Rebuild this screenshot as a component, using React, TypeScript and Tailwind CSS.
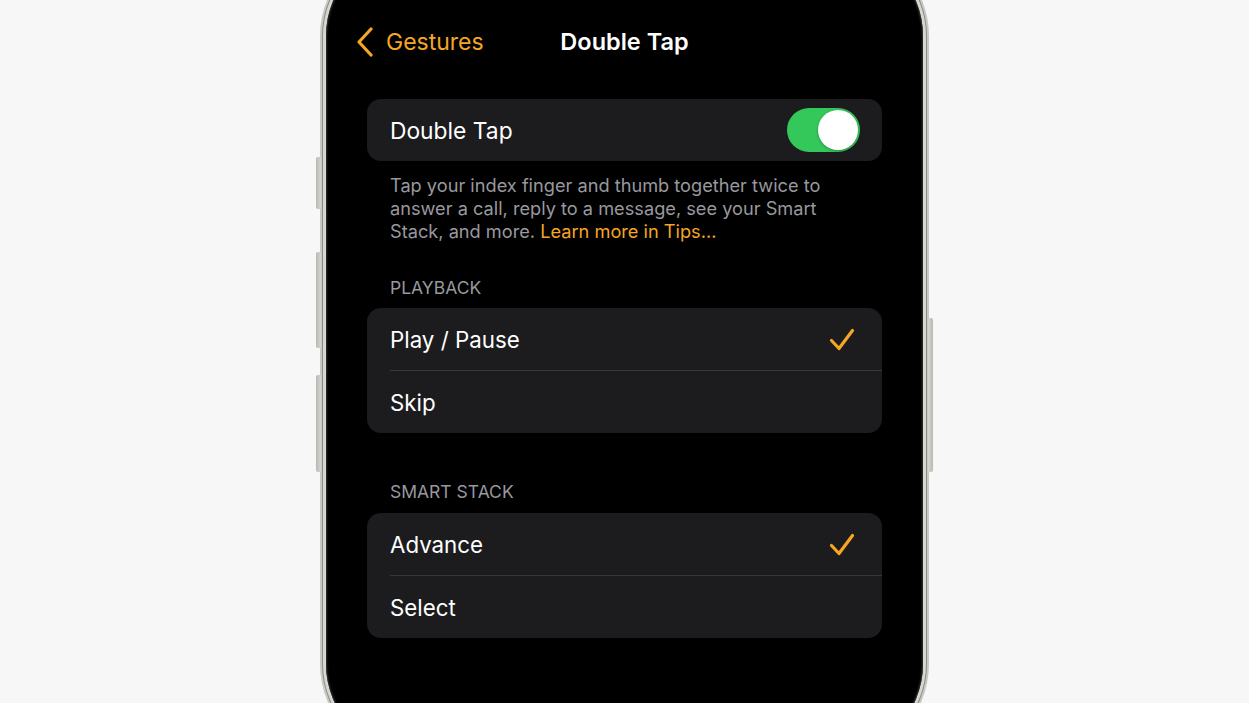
import React from "react";

const ORANGE = "#f5a623";

function Check() {
  return (
    <svg width="26" height="24" viewBox="0 0 26 24" fill="none">
      <path d="M2.5 12.5 L10 20.5 L23.5 2.5" stroke={ORANGE} strokeWidth="3.2" strokeLinecap="round" strokeLinejoin="round" />
    </svg>
  );
}

function Row({ label, checked, last }: { label: string; checked?: boolean; last?: boolean }) {
  return (
    <div className="flex flex-col">
      <div className="flex h-[62px] items-center justify-between pl-[23px] pr-[27px] pt-[2px]">
        <span className="text-[22.3px] text-white">{label}</span>
        {checked ? <Check /> : null}
      </div>
      {!last ? <div className="ml-[23px] h-px bg-[#38383a]" /> : null}
    </div>
  );
}

export default function App() {
  return (
    <div
      className="flex h-[703px] w-full justify-center overflow-hidden bg-[#f7f7f7]"
      style={{ fontFamily: "Inter, 'Noto Sans', sans-serif" }}
    >
      <div className="relative mt-[-60px] h-[820px] w-[609px] shrink-0">
        {/* side buttons */}
        <div className="absolute left-[-4px] top-[217px] h-[52px] w-[5px] rounded-l-[2px] bg-gradient-to-r from-[#b9b7b1] to-[#d9d7d2]" />
        <div className="absolute left-[-4px] top-[312px] h-[96px] w-[5px] rounded-l-[2px] bg-gradient-to-r from-[#b9b7b1] to-[#d9d7d2]" />
        <div className="absolute left-[-4px] top-[435px] h-[97px] w-[5px] rounded-l-[2px] bg-gradient-to-r from-[#b9b7b1] to-[#d9d7d2]" />
        <div className="absolute right-[-4px] top-[378px] h-[154px] w-[5px] rounded-r-[2px] bg-gradient-to-l from-[#b9b7b1] to-[#d9d7d2]" />

        <div className="h-full w-full rounded-[96px] bg-gradient-to-r from-[#c9c7c1] via-[#e4e2dd] to-[#c9c7c1] p-[2px]">
          <div className="h-full w-full rounded-[94px] bg-[#8d8b86] p-[1px]">
            <div className="h-full w-full rounded-[93px] bg-gradient-to-r from-[#d8d6d1] via-[#eeece8] to-[#d8d6d1] p-[3px]">
              <div className="flex h-full w-full flex-col rounded-[90px] bg-black px-[41px] pt-[74px] shadow-[inset_0_0_2px_1px_#333]">
                {/* header */}
                <div className="grid h-[44px] grid-cols-[1fr_auto_1fr] items-center">
                  <div className="ml-[-11px] flex items-center gap-[12px]">
                    <svg width="18" height="30" viewBox="0 0 18 30" fill="none">
                      <path d="M15 2 L3 15 L15 28" stroke={ORANGE} strokeWidth="3.2" strokeLinecap="round" strokeLinejoin="round" />
                    </svg>
                    <span className="text-[23px]" style={{ color: ORANGE }}>Gestures</span>
                  </div>
                  <span className="text-[23.5px] font-semibold text-white">Double Tap</span>
                  <div />
                </div>

                {/* toggle card */}
                <div className="mt-[35px] flex h-[62px] items-center justify-between rounded-[14px] bg-[#1c1c1e] pl-[23px] pr-[22px]">
                  <span className="pt-[2px] text-[22.8px] text-white">Double Tap</span>
                  <div className="flex h-[44px] w-[73px] items-center justify-end rounded-full bg-[#34c759] p-[2px]">
                    <div className="h-[40px] w-[40px] rounded-full bg-white shadow-[0_1px_3px_rgba(0,0,0,0.25)]" />
                  </div>
                </div>

                <p className="mt-[13px] px-[23px] text-[18.2px] leading-[23px] text-[#98989e]">
                  Tap your index finger and thumb together twice to
                  <br />
                  answer a call, reply to a message, see your Smart
                  <br />
                  Stack, and more. <span style={{ color: ORANGE }}>Learn more in Tips…</span>
                </p>

                <div className="mt-[35px] px-[23px] text-[17.5px] leading-[20px] text-[#98989e]">PLAYBACK</div>
                <div className="mt-[10px] overflow-hidden rounded-[14px] bg-[#1c1c1e]">
                  <Row label="Play / Pause" checked />
                  <Row label="Skip" last />
                </div>

                <div className="mt-[49px] px-[23px] text-[17.5px] leading-[20px] text-[#98989e]">SMART STACK</div>
                <div className="mt-[11px] overflow-hidden rounded-[14px] bg-[#1c1c1e]">
                  <Row label="Advance" checked />
                  <Row label="Select" last />
                </div>
              </div>
            </div>
          </div>
        </div>
      </div>
    </div>
  );
}
